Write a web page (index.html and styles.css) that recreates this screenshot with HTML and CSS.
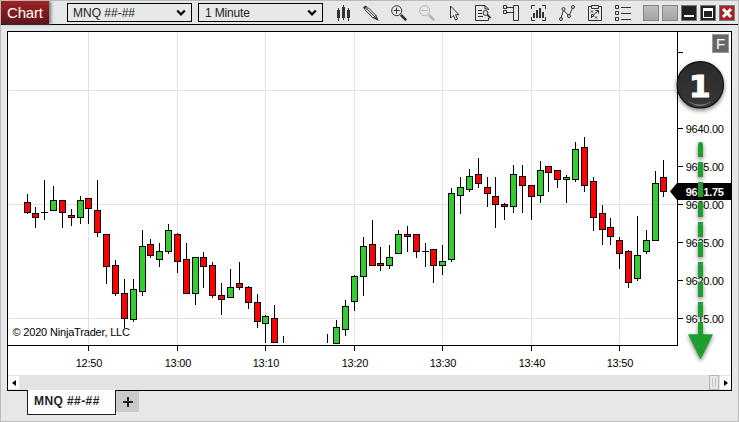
FILE: index.html
```html
<!DOCTYPE html>
<html lang="en">
<head>
<meta charset="utf-8">
<title>Chart</title>
<link rel="stylesheet" href="styles.css">
</head>
<body>
<main class="window">
  <header class="titlebar">
    <div class="brand">Chart</div>
    <div class="select instrument"><span>MNQ ##-##</span><svg class="chevron" viewBox="0 0 10 8"><path d="M1.2 1.5 5 5.5 8.8 1.5"/></svg></div>
    <div class="select interval"><span>1 Minute</span><svg class="chevron" viewBox="0 0 10 8"><path d="M1.2 1.5 5 5.5 8.8 1.5"/></svg></div>
    <nav class="tools">
      <svg viewBox="0 0 16 16"><path class="fill" d="M2 5h3v8H2zM7 2h3v11H7zM12 5h3v8h-3zM3 3h1v13H3zM8 0h1v15H8zM13 3h1v13h-1z"/></svg>
      <svg viewBox="0 0 16 16"><path class="fill" d="M0 2.500 2.500.5l1.800 1.300-2.800 2.700z"/><path d="M2.300 5.200 5 2.500l7.800 7.800-2.700 2.700zM3.700 3.900l7.700 7.700"/><path class="fill" d="m10 13.300 3.200-3.200L15.800 16z"/><path class="lighten" d="m11.300 12.800 1.700-1.700"/></svg>
      <svg viewBox="0 0 16 16"><circle cx="5.7" cy="5.7" r="5"/><path d="M2.7 5.5h6M5.5 2.7v6"/><path class="handle" d="m9.8 9.8 5.4 5.4"/></svg>
      <svg class="disabled" viewBox="0 0 16 16"><circle cx="5.7" cy="5.7" r="5"/><path d="M2.7 5.5h6"/><path class="handle" d="m9.8 9.8 5.4 5.4"/></svg>
      <svg viewBox="0 0 16 16"><path d="M3.5 1v12l3-2.5L8.5 15l2-1-2-4.3H12z"/></svg>
      <svg viewBox="0 0 16 16"><path d="M13.5 5V4l-3.500-3.500H.5v15h13V13M10 .5V4h3M3 5.500h4M3 8.500h4M3 11.500h5"/><circle cx="10.500" cy="8" r="2.400"/><path class="thick" d="m12.200 9.700 3.300 3.300"/></svg>
      <svg viewBox="0 0 16 16"><path d="M.5.5h3v3h-3zM.5 5.500h3v3h-3zM3.500 2.500H10M3.500 7.500H10M10.500.5h5v15h-5z"/></svg>
      <svg viewBox="0 0 16 16"><path d="M.5 4V.5H4M11 .5h3.500V4M.5 12v3.500H4M11 15.500h3.500V12"/><path class="fill" d="M2 8h2v5H2zM5 5h2v8H5zM8 3h2v10H8zM11 7h2v6h-2z"/></svg>
      <svg viewBox="0 0 16 16"><path d="M2 13 4.500 5l5.500 6 4-9"/><g class="nodes"><circle cx="2" cy="14" r="1.500"/><circle cx="4.500" cy="4" r="1.500"/><circle cx="10" cy="11" r="1.500"/><circle cx="14" cy="2" r="1.500"/></g></svg>
      <svg viewBox="0 0 16 16"><path d="M4 1.500H1.500v14h13v-14H12M4.500.5h7v3h-7zM4.500 13V9.500h2v2h-2M4 5.500l2 2m0-2-2 2M8 11.500l2 2m0-2-2 2M7 9.500 11 6M8.500 5.500h3v3"/></svg>
      <svg viewBox="0 0 16 16"><path d="M.5.5h3v3h-3zM.5 6.500h3v3h-3zM.5 12.500h3v3h-3zM6 2.500h10M6 8.500h10M6 14.500h10"/></svg>
    </nav>
    <div class="controls">
      <i class="blank"></i><i class="blank"></i>
      <i class="dark"><svg viewBox="0 0 14 14"><path class="white" d="M2 9h10v2H2z"/></svg></i>
      <i class="dark"><svg viewBox="0 0 14 14"><path class="white" fill-rule="evenodd" d="M2 2h10v10H2zM3 5v6h8V5z"/></svg></i>
      <i class="close"><svg viewBox="0 0 14 14"><path d="m3 3 8 8m0-8-8 8"/></svg></i>
    </div>
  </header>
  <section class="panel">
    <svg class="chart" id="chart" viewBox="8 32 723 343"></svg>
    <div class="fixed-scale">F</div>
    <div class="scrollbar">
      <span class="scroll-button"><svg viewBox="0 0 4 6"><path d="M4 0v6L0 3z"/></svg></span>
      <span class="track"><i class="thumb"></i></span>
      <span class="scroll-button"><svg viewBox="0 0 4 6"><path d="M0 0v6l4-3z"/></svg></span>
    </div>
  </section>
  <footer class="tabs">
    <div class="tab">MNQ ##-##</div>
    <div class="add"><svg viewBox="0 0 10 10"><path d="M5 0v10M0 5h10"/></svg></div>
  </footer>
  <svg class="callout" viewBox="670 55 69 315">
    <defs><linearGradient id="ball" x2="0" y2="1"><stop offset="0" stop-color="#292929"/><stop offset="1" stop-color="#383838"/></linearGradient></defs>
    <g class="shadow">
      <circle cx="700.300" cy="84.800" r="23.200" fill="url(#ball)" stroke="#111" stroke-width="1.200"/>
    </g>
    <path d="M688 101q12 7 24 0-12 10-24 0z" fill="#777"/>
    <text class="step" x="699.700" y="96.500" text-anchor="middle">1</text>
    <g class="shadow">
      <path d="M698 157v-12q0-3 2.500-3t2.500 3v12z" fill="#1d9f2d"/>
      <path d="M700.500 162V337" stroke="#1d9f2d" stroke-width="5" stroke-dasharray="15 5"/>
      <path d="M688 334.300h25L700.500 359.500z" fill="#1d9f2d"/>
    </g>
  </svg>
</main>
<script src="chart.js"></script>
</body>
</html>
```
FILE: styles.css
```css
* { box-sizing: border-box; }
body {
  margin: 0;
  font-family: "Liberation Sans", Arial, sans-serif;
  color: #000;
}
.window {
  position: relative;
  width: 739px;
  height: 422px;
  border: 1px solid #b9babb;
  background: #e6e7e8;
  overflow: hidden;
}
.titlebar {
  display: flex;
  height: 24px;
  border-bottom: 1px solid #000;
}
.brand {
  width: 48px;
  height: 23px;
  padding-left: 6px;
  background: linear-gradient(#a02226, #5e1518);
  box-shadow: 2px 0 3px #777;
  color: #fff;
  font-size: 15px;
  letter-spacing: -.2px;
  line-height: 23px;
}
.select {
  display: flex;
  align-items: center;
  justify-content: space-between;
  width: 125px;
  height: 19px;
  margin-top: 2px;
  padding: 0 5px;
  border: 1px solid #000;
  background: #e7e9e8;
  font-size: 12px;
  line-height: 18px;
  color: #222;
}
.instrument { margin-left: 18px; }
.interval { margin-left: 6px; padding-left: 6px; letter-spacing: -.15px; }
.chevron { width: 10px; height: 8px; }
.chevron path { fill: none; stroke: #000; stroke-width: 2.2; }
.tools {
  display: flex;
  gap: 12px;
  margin: 4px 0 0 12px;
}
.tools svg {
  width: 16px;
  height: 16px;
  fill: none;
  stroke: #333;
  stroke-width: 1;
}
.tools .fill { fill: #333; stroke: none; }
.tools .lighten { stroke: #ccc; stroke-width: .8; }
.tools .handle { stroke-width: 2.6; }
.tools .thick { stroke-width: 1.8; }
.tools .disabled { stroke: #b2b3b4; }
.tools .nodes { fill: #e6e7e8; }
.controls {
  display: flex;
  gap: 3px;
  margin: 4px 0 0 12px;
}
.controls i {
  width: 16px;
  height: 16px;
  border: 1px solid #77787a;
}
.controls svg { display: block; width: 14px; height: 14px; }
.controls .blank { background: linear-gradient(#bebcbd, #a5a3a4); border-color: #858585; }
.controls .dark { background: #231f20; }
.controls .white { fill: #fff; }
.controls .close { background: #a82328; }
.controls .close path { stroke: #fff; stroke-width: 3; }
.panel {
  position: relative;
  width: 725px;
  height: 360px;
  margin: 6px 0 0 6px;
  border: 1px solid #000;
  background: #fff;
}
.chart { display: block; width: 723px; height: 343px; }
.chart .crisp { shape-rendering: crispEdges; }
.chart text { font-size: 11px; letter-spacing: -.25px; }
.chart .copyright { letter-spacing: -.18px; }
.chart .price { fill: #fff; font-weight: bold; }
.fixed-scale {
  position: absolute;
  top: 2px;
  right: 2px;
  width: 17px;
  height: 19px;
  border: 1px solid #999;
  background: #666;
  color: #fff;
  font-size: 15px;
  line-height: 17px;
  text-align: center;
}
.scrollbar { display: flex; height: 15px; background: #e3e3e3; }
.scroll-button {
  display: flex;
  align-items: center;
  justify-content: center;
  width: 11px;
  height: 13px;
  margin-top: 1px;
  background: #fff;
}
.scroll-button svg { width: 4px; height: 6px; }
.track { display: flex; flex: 1; justify-content: flex-end; }
.thumb {
  width: 10px;
  height: 15px;
  margin-right: 1px;
  border: 1px solid #b5b5b5;
  background: #e8e8e8 linear-gradient(90deg, #c4c4c4 1px, transparent 1px 3px, #c4c4c4 3px) 2px 2px / 4px 9px no-repeat;
}
.tabs {
  position: relative;
  display: flex;
  margin: -1px 0 0 26px;
}
.tab {
  width: 89px;
  height: 25px;
  padding-left: 6px;
  border: 1px solid #222;
  border-top: 0;
  background: #fff;
  color: #222;
  font-size: 12px;
  font-weight: bold;
  letter-spacing: .42px;
  line-height: 23px;
}
.add {
  display: flex;
  align-items: center;
  justify-content: center;
  width: 23px;
  height: 21px;
  margin-top: 1px;
  background: #cbcbcb;
}
.add svg { width: 10px; height: 10px; }
.add path { stroke: #222; stroke-width: 2; }
.callout {
  position: absolute;
  left: 669px;
  top: 54px;
  width: 69px;
  height: 315px;
}
.shadow { filter: drop-shadow(0 2px 2px rgba(0, 0, 0, .5)); }
.step {
  fill: #fff;
  stroke: #fff;
  stroke-width: 1.2px;
  font: bold 31px "DejaVu Sans", sans-serif;
}
```
FILE: chart.js
```js
// Candles: x centre, high, low, body top, body bottom, direction (r down, g up, d flat, w wick only)
const candles = `
27 194 214 202 213 r|35 207 228 213 218 r|44 180 220 212 213 d|53 186 211 200 211 g
62 200 228 200 213 r|71 209 226 215 218 r|80 196 224 200 218 g|88 198 224 198 209 r
97 180 237 210 233 r|106 234 284 234 267 r|115 260 296 265 294 r|124 279 328 293 319 r
133 279 322 289 320 g|142 230 296 246 292 g|150 239 258 244 256 r|159 243 267 251 260 g
168 224 254 230 252 g|177 233 273 234 262 r|186 243 294 259 294 r|195 257 305 257 294 g
203 252 288 257 267 r|212 262 298 265 296 r|221 283 315 295 300 r|230 269 298 287 298 g
239 262 290 283 288 r|248 286 309 287 303 r|257 294 328 302 322 r|265 315 343 316 324 g
274 305 343 318 343 r|283 336 343 0 0 w|327 334 343 0 0 w|336 320 343 327 344 g
345 300 336 306 330 g|354 275 311 276 302 g|363 237 296 246 277 g|372 220 266 244 266 r
380 247 271 263 266 r|389 245 269 257 266 g|398 230 254 234 254 g|407 226 252 234 237 r
416 234 258 234 252 r|425 243 267 251 252 d|433 249 283 249 266 r|442 245 275 261 266 g
451 188 262 193 260 g|460 177 214 187 196 g|469 169 192 176 190 g|478 158 188 174 184 r
487 177 207 187 194 r|495 177 228 196 205 r|504 203 220 204 207 r|513 165 213 174 207 g
522 165 213 176 186 r|531 185 220 185 197 r|540 161 203 170 196 g|548 166 192 166 173 r
557 170 188 170 180 r|566 175 203 177 180 g|575 142 182 149 180 g|584 137 192 147 186 r
593 177 231 181 218 r|602 205 245 213 230 r|610 218 245 227 237 r|619 237 269 240 254 r
628 250 288 251 283 r|637 216 281 255 279 g|646 230 254 240 252 g|655 171 241 183 241 g
663 160 197 177 192 r`.trim().split(/[|\n]/).map(row => row.split(" "));

const rect = (x, y, w, h, fill) => `<rect x="${x}" y="${y}" width="${w}" height="${h}" fill="${fill}"/>`;
const times = { 88: "12:50", 177: "13:00", 265: "13:10", 354: "13:20", 442: "13:30", 531: "13:40", 619: "13:50" };
let shapes = "";
let labels = "";

for (const y of [90, 204, 318]) shapes += rect(9, y, 667, 1, "#e2e2e2");
for (const [x, time] of Object.entries(times)) {
  shapes += rect(x, 32, 1, 311, "#e2e2e2") + rect(x, 346, 1, 5, "#000");
  labels += `<text x="${+x + 0.9}" y="367" text-anchor="middle">${time}</text>`;
}
labels += `<text class="copyright" x="12.5" y="336">© 2020 NinjaTrader, LLC</text>`;

for (const [x, high, low, top, bottom, kind] of candles) {
  shapes += rect(x, high, 1, low - high, "#000");
  if (kind === "w") continue;
  shapes += rect(x - 3, top, 7, bottom - top, "#000");
  if (kind !== "d") shapes += rect(x - 2, +top + 1, 5, bottom - top - 2, kind === "g" ? "#32cd32" : "#f00");
}

shapes += rect(677, 32, 1, 314, "#000") + rect(8, 345, 670, 1, "#000");
for (let y = 52, price = 9650; y <= 318; y += 38, price -= 5) {
  shapes += rect(678, y, 5, 1, "#000");
  if (price <= 9640) labels += `<text x="685.7" y="${y + 5}">${price}.00</text>`;
}
labels += `<path d="M670 191.500 677 183h54v17h-54z"/><text class="price" x="685.7" y="196">9631.75</text>`;

document.getElementById("chart").innerHTML = `<g class="crisp">${shapes}</g>${labels}`;
```
